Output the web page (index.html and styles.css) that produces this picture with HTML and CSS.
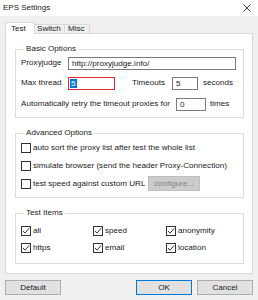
FILE: index.html
```html
<!DOCTYPE html>
<html>
<head>
<meta charset="utf-8">
<link rel="stylesheet" href="styles.css">
</head>
<body>
<div class="window">
  <div class="titlebar">
    <span class="title">EPS Settings</span>
    <svg class="close" width="8" height="8" viewBox="0 0 8 8"><path d="M0.5 0.5 L7.5 7.5 M7.5 0.5 L0.5 7.5" stroke="#222" stroke-width="0.9" fill="none"/></svg>
  </div>
  <div class="tabs">
    <div class="tab active">Test</div>
    <div class="tab t-switch">Switch</div>
    <div class="tab t-misc">Misc</div>
  </div>
  <div class="panel">
    <fieldset class="group g-basic">
      <legend>Basic Options</legend>
      <div class="row r1">
        <span class="lbl w-label">Proxyjudge</span>
        <div class="edit e-url">http://proxyjudge.info/</div>
      </div>
      <div class="row r2">
        <span class="lbl w-label">Max thread</span>
        <div class="edit e-thread focus"><span class="sel">5</span></div>
        <span class="lbl w-timeouts">Timeouts</span>
        <div class="edit e-timeout">5</div>
        <span class="lbl after">seconds</span>
      </div>
      <div class="row r3">
        <span class="lbl w-retry">Automatically retry the timeout proxies for</span>
        <div class="edit e-retry">0</div>
        <span class="lbl after2">times</span>
      </div>
    </fieldset>

    <fieldset class="group g-adv">
      <legend>Advanced Options</legend>
      <div class="row c1"><span class="cb"></span><span class="lbl">auto sort the proxy list after test the whole list</span></div>
      <div class="row c2"><span class="cb"></span><span class="lbl">simulate browser (send the header Proxy-Connection)</span></div>
      <div class="row c3"><span class="cb"></span><span class="lbl w-custom">test speed against custom URL</span><div class="btn disabled">configure...</div></div>
    </fieldset>

    <fieldset class="group g-items">
      <legend>Test Items</legend>
      <div class="grid">
        <div class="row"><span class="cb on"><svg width="8" height="8" viewBox="0 0 8 8"><path d="M1 4 L3 6.2 L7.2 1.3" stroke="#333" stroke-width="1" fill="none"/></svg></span><span class="lbl">all</span></div>
        <div class="row"><span class="cb on"><svg width="8" height="8" viewBox="0 0 8 8"><path d="M1 4 L3 6.2 L7.2 1.3" stroke="#333" stroke-width="1" fill="none"/></svg></span><span class="lbl">speed</span></div>
        <div class="row"><span class="cb on"><svg width="8" height="8" viewBox="0 0 8 8"><path d="M1 4 L3 6.2 L7.2 1.3" stroke="#333" stroke-width="1" fill="none"/></svg></span><span class="lbl">anonymity</span></div>
        <div class="row"><span class="cb on"><svg width="8" height="8" viewBox="0 0 8 8"><path d="M1 4 L3 6.2 L7.2 1.3" stroke="#333" stroke-width="1" fill="none"/></svg></span><span class="lbl">https</span></div>
        <div class="row"><span class="cb on"><svg width="8" height="8" viewBox="0 0 8 8"><path d="M1 4 L3 6.2 L7.2 1.3" stroke="#333" stroke-width="1" fill="none"/></svg></span><span class="lbl">email</span></div>
        <div class="row"><span class="cb on"><svg width="8" height="8" viewBox="0 0 8 8"><path d="M1 4 L3 6.2 L7.2 1.3" stroke="#333" stroke-width="1" fill="none"/></svg></span><span class="lbl">location</span></div>
      </div>
    </fieldset>
  </div>
  <div class="buttons">
    <div class="btn b-default">Default</div>
    <div class="right">
      <div class="btn b-ok">OK</div>
      <div class="btn b-cancel">Cancel</div>
    </div>
  </div>
</div>
</body>
</html>
```

FILE: styles.css
```css
* { box-sizing: border-box; }
html, body {
  margin: 0;
  padding: 0;
  background: #f0f0f0;
}
body {
  width: 258px;
  height: 300px;
  overflow: hidden;
  font-family: "Liberation Sans", Arial, sans-serif;
  font-size: 8.1px;
  color: #1a1a1a;
}
.window { width: 258px; height: 300px; }

.titlebar {
  height: 16px;
  background: #fff;
  display: flex;
  align-items: center;
  justify-content: space-between;
  padding: 0 7px 0 3px;
}
.title { font-size: 8px; line-height: 10px; }
.close { display: block; }

.tabs {
  display: flex;
  align-items: flex-end;
  height: 11px;
  margin-top: 6px;
  padding-left: 5px;
}
.tab {
  height: 9px;
  border: 1px solid #d9d9d9;
  border-bottom: none;
  background: #f0f0f0;
  line-height: 8px;
  padding-left: 2px;
}
.tab.active {
  position: relative;
  z-index: 1;
  width: 30px;
  height: 12px;
  margin-bottom: -1px;
  background: #fff;
  padding-left: 5px;
  line-height: 11px;
}
.t-switch { width: 30px; border-left: none; }
.t-misc { width: 25px; border-left: none; padding-left: 3px; }

.panel {
  margin: 0 5px;
  background: #fff;
  border: 1px solid #d9d9d9;
  padding: 10px 8px 9px 9px;
}

.group {
  margin: 0;
  padding: 0 5px 6px 5px;
  border: 1px solid #dcdcdc;
  min-width: 0;
}
.group legend {
  padding: 0 2px;
  margin-left: 3px;
  height: 10px;
  line-height: 10px;
}
.g-adv, .g-items { margin-top: 10px; }

.row {
  display: flex;
  align-items: center;
  height: 14px;
  white-space: nowrap;
}
.lbl { line-height: 10px; flex: none; }
.w-label { width: 47px; }
.w-timeouts { width: 40px; margin-left: 17px; }
.w-retry { width: 150px; }
.w-custom { width: 115px; }
.after { margin-left: 5px; }
.after2 { margin-left: 4px; }

.r1 { margin-top: 2px; }
.r2 { margin-top: 6px; }
.r3 { margin-top: 7px; }

.edit {
  height: 13px;
  border: 1px solid #7a7a7a;
  background: #fff;
  padding-left: 3px;
  line-height: 11px;
  display: flex;
  align-items: center;
  flex: none;
}
.e-url { width: 168px; }
.e-thread { width: 47px; padding-left: 1px; }
.e-thread.focus { border-color: #e3262d; }
.sel {
  background: #0078d7;
  color: #fff;
  height: 9px;
  line-height: 9px;
  padding: 0 1px;
}
.e-timeout { width: 26px; }
.e-retry { width: 30px; margin-left: 5px; }

.c1 { margin-top: 3px; }
.c2 { margin-top: 4px; }
.c3 { margin-top: 3px; height: 15px; }
.g-adv { padding-bottom: 6px; }

.cb {
  width: 10px;
  height: 10px;
  border: 1px solid #333;
  background: #fff;
  margin-right: 2px;
  flex: none;
  display: flex;
  align-items: center;
  justify-content: center;
}
.cb svg { display: block; }

.btn {
  height: 15px;
  border: 1px solid #adadad;
  background: #e1e1e1;
  display: flex;
  align-items: center;
  justify-content: center;
  line-height: 10px;
}
.btn.disabled {
  width: 52px;
  margin-left: 0;
  background: #cccccc;
  border-color: #bfbfbf;
  color: #838383;
}

.g-items { padding-bottom: 8px; }
.grid {
  display: grid;
  grid-template-columns: 72px 73px auto;
  row-gap: 3px;
  margin-top: 6px;
}

.buttons {
  display: flex;
  justify-content: space-between;
  margin-top: 6px;
  padding: 0 5px;
}
.right { display: flex; gap: 5px; }
.b-default, .b-ok, .b-cancel { width: 56px; }
.b-ok { border-color: #0078d7; }
```
